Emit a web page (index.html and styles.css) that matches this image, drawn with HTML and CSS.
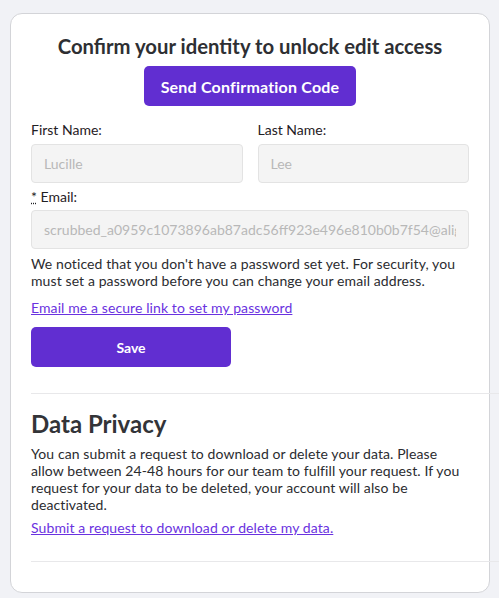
FILE: index.html
```html
<!DOCTYPE html>
<html lang="en">
<head>
    <meta charset="UTF-8">
    <meta name="viewport" content="width=device-width, initial-scale=1.0">
    <title>Account Settings</title>
    <link rel="stylesheet" href="styles.css">
</head>
<body>
    <div class="card">
        <!-- identity -->
        <h2 class="title">Confirm your identity to unlock edit access</h2>
        <div class="center">
            <button class="btn btn-code" type="button">Send Confirmation Code</button>
        </div>

        <div class="name-row">
            <div class="field">
                <label for="first">First Name:</label>
                <input id="first" type="text" value="Lucille" disabled>
            </div>
            <div class="field">
                <label for="last">Last Name:</label>
                <input id="last" type="text" value="Lee" disabled>
            </div>
        </div>

        <div class="field email">
            <label for="email"><abbr title="required">*</abbr> Email:</label>
            <input id="email" type="text" value="scrubbed_a0959c1073896ab87adc56ff923e496e810b0b7f54@aligned.com" disabled>
        </div>

        <p class="note">We noticed that you don't have a password set yet. For security, you must set a password before you can change your email address.</p>
        <a class="link" href="#">Email me a secure link to set my password</a>

        <button class="btn btn-save" type="button">Save</button>

        <hr class="divider">

        <!-- privacy -->
        <h2 class="section-title">Data Privacy</h2>
        <p class="note privacy">You can submit a request to download or delete your data. Please allow between 24-48 hours for our team to fulfill your request. If you request for your data to be deleted, your account will also be deactivated.</p>
        <a class="link" href="#">Submit a request to download or delete my data.</a>

        <hr class="divider last">
    </div>
</body>
</html>
```

FILE: styles.css
```css
body {
    margin: 0;
    padding: 13px 9px 0 10px;
    background-color: #f1f2f6;
    font-family: Lato, "Noto Sans", Arial, sans-serif;
    color: #2b2c30;
}

.card {
    width: 480px;
    box-sizing: border-box;
    background-color: #fff;
    border: 1px solid #d3d4d8;
    border-radius: 12px;
    padding: 20px 20px 30px 20px;
}

.title {
    margin: 0;
    font-size: 20.3px;
    line-height: 24px;
    font-weight: 700;
    text-align: center;
    color: #2e2f33;
}

.center {
    text-align: center;
    margin-top: 8px;
}

.btn {
    border: none;
    border-radius: 5px;
    background-color: #612ed1;
    color: #fff;
    font-family: inherit;
    font-weight: 700;
    cursor: pointer;
    height: 40px;
}

.btn-code {
    width: 212px;
    font-size: 16px;
    letter-spacing: 0.2px;
}

.btn-save {
    display: block;
    width: 200px;
    font-size: 14px;
    margin-top: 11px;
}

.name-row {
    display: grid;
    grid-template-columns: 1fr 1fr;
    gap: 15px;
    margin-top: 15px;
}

.field label {
    display: block;
    font-size: 14px;
    line-height: 18px;
    margin-bottom: 5px;
    color: #1f2024;
}

.field.email {
    margin-top: 5px;
}

.field.email label {
    margin-bottom: 4px;
}

abbr {
    text-decoration: underline dotted;
}

.field input {
    display: block;
    width: 100%;
    box-sizing: border-box;
    height: 39px;
    padding: 0 12px;
    border: 1px solid #e3e3e3;
    border-radius: 4px;
    background-color: #f4f4f4;
    font-family: inherit;
    font-size: 14px;
    color: #b8b8b8;
}

.note {
    margin: 6px 0 10px 0;
    font-size: 14px;
    line-height: 17px;
    letter-spacing: 0.1px;
    color: #2b2c30;
}

.note.privacy {
    margin-bottom: 6px;
}

.link {
    display: block;
    font-size: 14px;
    line-height: 17px;
    letter-spacing: 0.1px;
    color: #6a32e0;
}

.divider {
    border: none;
    border-top: 1px solid #e8e8ea;
    margin: 26px -40px 0 0;
}

.section-title {
    margin: 14px 0 0 0;
    font-size: 24px;
    line-height: 31px;
    font-weight: 700;
    color: #333438;
}

.divider.last {
    margin-top: 25px;
}
```
